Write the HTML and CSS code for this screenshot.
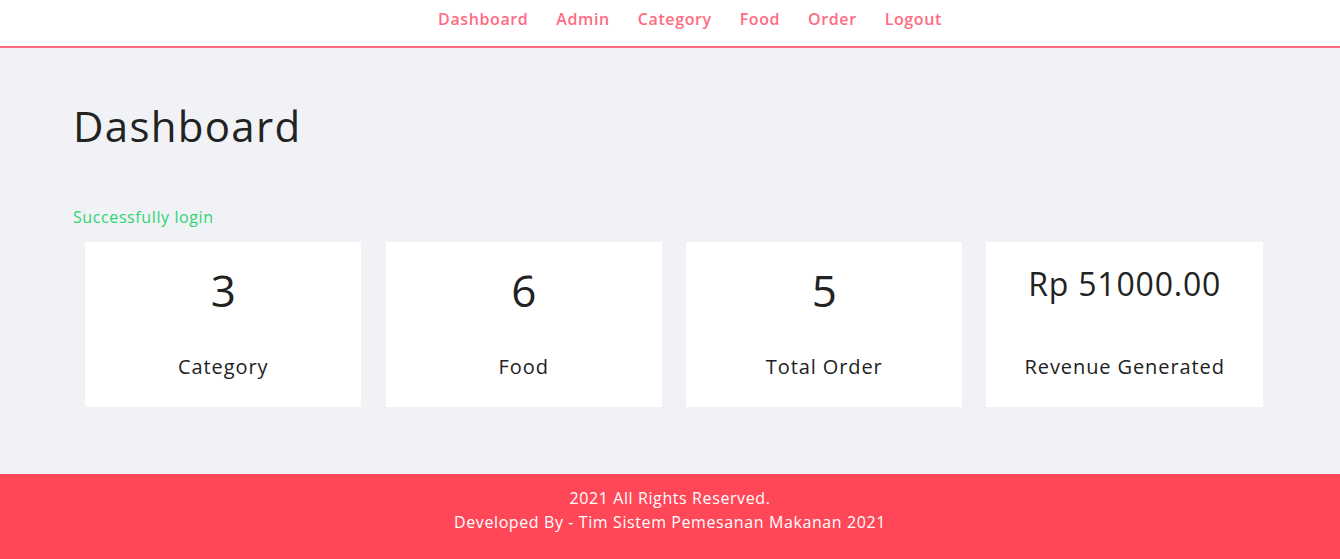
FILE: index.html
```html
<!DOCTYPE html>
<html>
<head>
<meta charset="utf-8">
<link rel="stylesheet" href="styles.css">
</head>
<body>
<nav class="menu">
  <ul class="menu-list">
    <li><a href="#">Dashboard</a></li>
    <li><a href="#">Admin</a></li>
    <li><a href="#">Category</a></li>
    <li><a href="#">Food</a></li>
    <li><a href="#">Order</a></li>
    <li><a href="#">Logout</a></li>
  </ul>
</nav>
<main class="main">
  <div class="wrapper">
    <h1 class="title">Dashboard</h1>
    <p class="success">Successfully login</p>
    <div class="cards">
      <div class="card"><h1 class="num">3</h1><p class="label">Category</p></div>
      <div class="card"><h1 class="num">6</h1><p class="label">Food</p></div>
      <div class="card"><h1 class="num">5</h1><p class="label">Total Order</p></div>
      <div class="card"><h1 class="num money">Rp 51000.00</h1><p class="label">Revenue Generated</p></div>
    </div>
  </div>
</main>
<footer class="footer">
  <p>2021 All Rights Reserved.<br>Developed By - Tim Sistem Pemesanan Makanan 2021</p>
</footer>
</body>
</html>
```
FILE: styles.css
```css
* { box-sizing: border-box; }
body {
  margin: 0;
  font-family: "Open Sans", "Noto Sans", sans-serif;
  color: #2f3542;
  background: #fff;
}
.menu {
  height: 48px;
  border-bottom: 2px solid #ff6b81;
  background: #fff;
}
.menu-list {
  margin: 0;
  padding: 7px 0 0 40px;
  list-style: none;
  display: flex;
  justify-content: center;
  height: 46px;
}
.menu-list li { padding: 0 14px; line-height: 24px; }
.menu-list a {
  color: #ff6b81;
  text-decoration: none;
  font-weight: 600;
  font-size: 16px;
  letter-spacing: 0.6px;
}
.main {
  background: #f1f2f6;
  padding: 0 0 67px;
}
.wrapper {
  width: 1202px;
  margin-left: calc(50% - 597px);
}
.title {
  margin: 0;
  padding-top: 48px;
  font-size: 42px;
  font-weight: 400;
  color: #222;
  line-height: 60px;
  letter-spacing: 1.3px;
}
.success {
  margin: 0;
  padding-top: 49px;
  color: #2ed573;
  font-size: 16px;
  line-height: 24px;
  letter-spacing: 0.6px;
}
.cards {
  display: flex;
  padding-top: 13px;
}
.card {
  width: 23%;
  margin: 0 1%;
  background: #fff;
  height: 165px;
  text-align: center;
  padding-top: 22px;
}
.num {
  margin: 0;
  font-size: 44px;
  font-weight: 400;
  line-height: 52px;
  color: #222;
}
.money { font-size: 32px; font-weight: 500; line-height: 46px; letter-spacing: 0.8px; margin-top: -3px; }
.label {
  margin: 0;
  padding-top: 36px;
  font-size: 20px;
  line-height: 30px;
  color: #222;
  letter-spacing: 0.9px;
}
.money + .label { padding-top: 45px; }
.footer {
  background: #ff4757;
  color: #fff;
  text-align: center;
  height: 85px;
  padding-top: 12px;
}
.footer p {
  margin: 0;
  font-size: 16px;
  line-height: 24px;
  letter-spacing: 0.6px;
}
```
